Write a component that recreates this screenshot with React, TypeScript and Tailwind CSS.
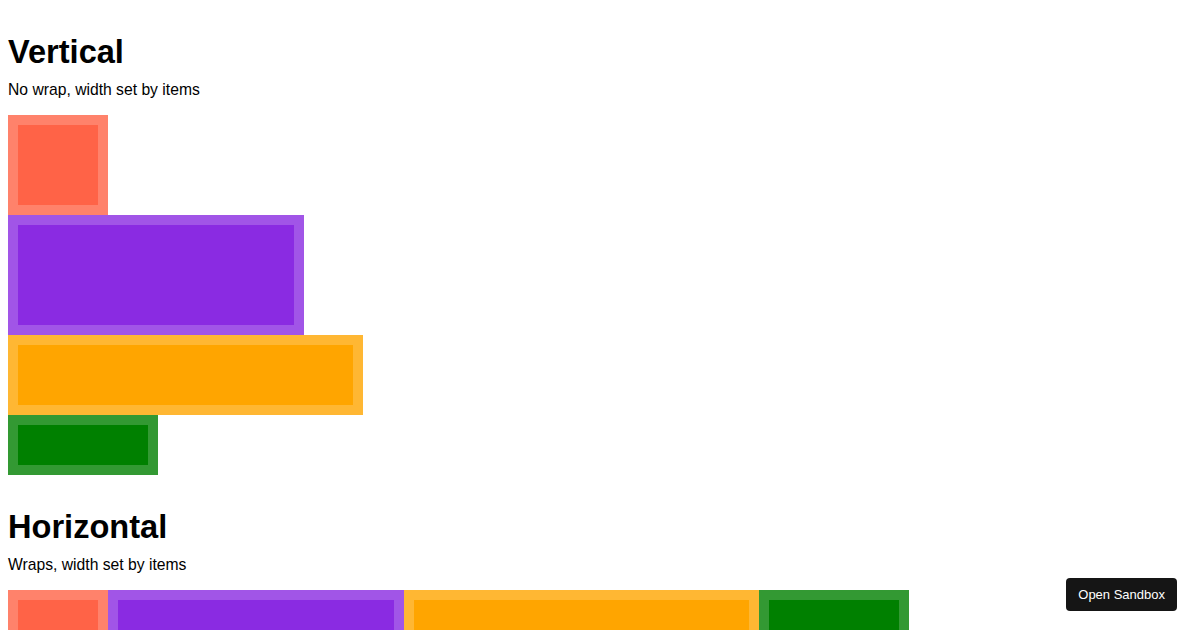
import React from "react";

const items = [
  { w: "w-[100px]", h: "h-[100px]", bg: "bg-[#ff6347]" },
  { w: "w-[296px]", h: "h-[120px]", bg: "bg-[#8a2be2]" },
  { w: "w-[355px]", h: "h-[80px]", bg: "bg-[#ffa500]" },
  { w: "w-[150px]", h: "h-[60px]", bg: "bg-[#008000]" },
];

function Box({ w, h, bg }: { w: string; h: string; bg: string }) {
  return (
    <div className={`${w} ${h} ${bg} shrink-0 border-[10px] border-[rgba(255,255,255,0.2)]`} />
  );
}

function Section({ title, subtitle, row }: { title: string; subtitle: string; row?: boolean }) {
  return (
    <section className="pl-[8px]">
      <h1 className="pt-[33px] text-[32.6px] leading-[37px] font-bold text-black">{title}</h1>
      <p className="mt-[10px] text-[15.7px] leading-[19px] text-black">{subtitle}</p>
      <div className={row ? "mt-[16px] flex flex-row flex-wrap items-start" : "mt-[16px] flex flex-col items-start"}>
        {items.map((it, i) => (
          <Box key={i} {...it} />
        ))}
      </div>
    </section>
  );
}

export default function App() {
  return (
    <div className="w-[1200px] h-[630px] overflow-hidden bg-white relative" style={{ fontFamily: '"Liberation Sans", Arial, sans-serif' }}>
      <Section title="Vertical" subtitle="No wrap, width set by items" />
      <Section title="Horizontal" subtitle="Wraps, width set by items" row />
      <button className="absolute right-[23px] bottom-[19px] h-[33px] px-[12px] rounded-[4px] bg-[#151515] text-white text-[13px] leading-[33px]">
        Open Sandbox
      </button>
    </div>
  );
}
